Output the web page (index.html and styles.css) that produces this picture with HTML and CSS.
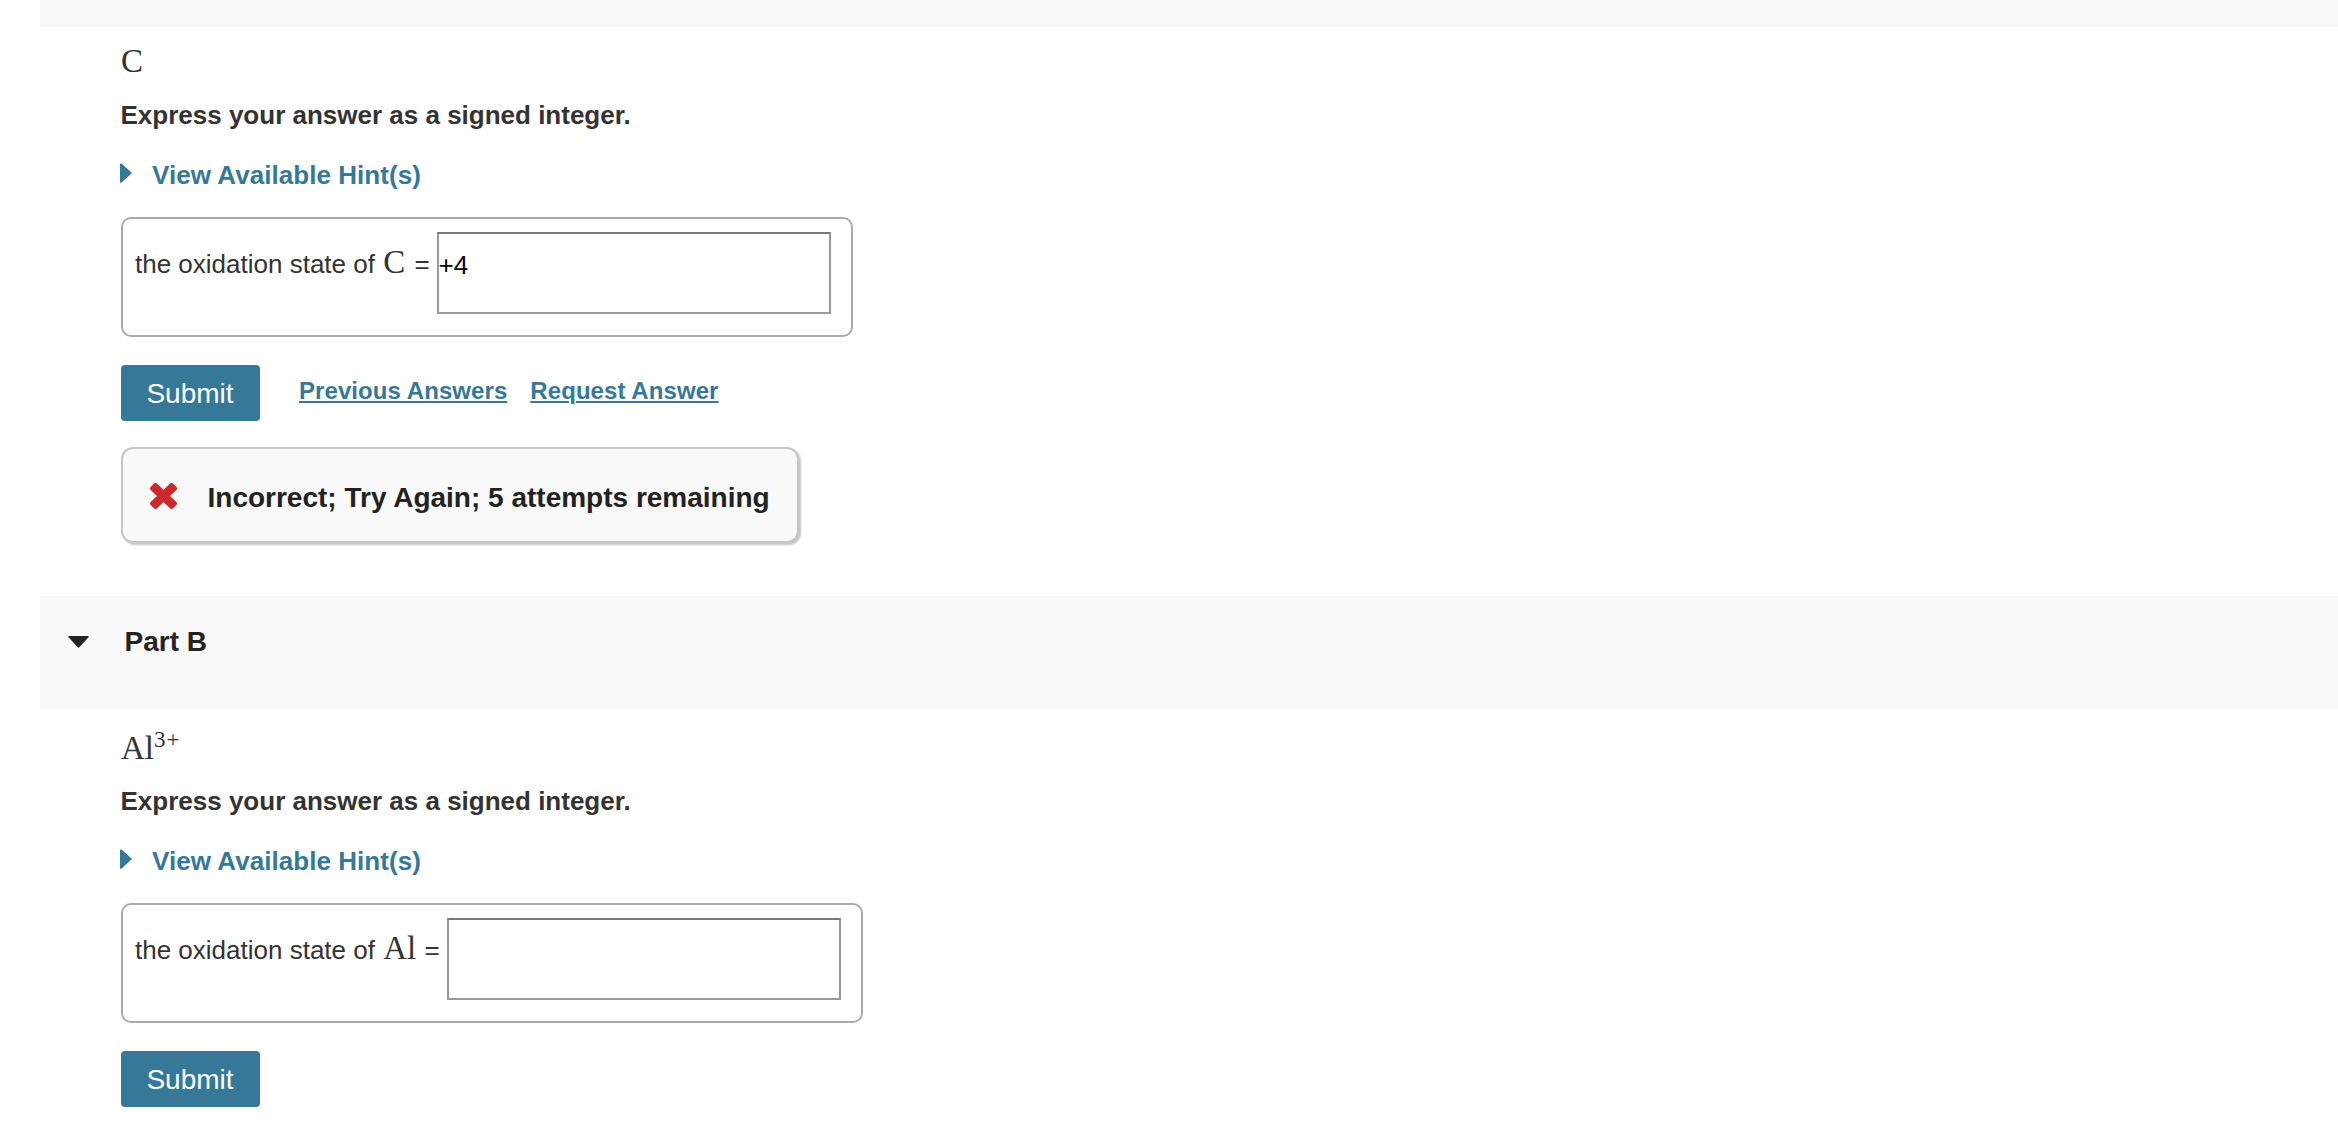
FILE: index.html
```html
<!DOCTYPE html>
<html>
<head>
    <meta charset="utf-8">
    <meta name="viewport" content="width=device-width, initial-scale=1">
    <title>Oxidation States</title>
    <link rel="stylesheet" href="styles.css">
</head>
<body>
    <div class="part-header part-header-top"></div>

    <div class="part">
        <p class="formula">C</p>
        <p class="instructions">Express your answer as a signed integer.</p>
        <a class="hints">
            <svg class="hint-arrow" viewBox="0 0 12 20"><path d="M0 1Q0 0 1.5 0.6L11.5 9.4Q12 10 11.5 10.6L1.5 19.4Q0 20 0 19Z"/></svg>
            View Available Hint(s)
        </a>
        <div class="answer-box">
            <label class="answer-label" for="answer-a">the oxidation state of <span class="math math-c">C</span> =</label>
            <input class="answer-input" id="answer-a" type="text" value="+4">
        </div>
        <div class="actions">
            <button class="submit-button">Submit</button>
            <a class="action-link">Previous Answers</a>
            <a class="action-link">Request Answer</a>
        </div>
        <div class="feedback">
            <svg class="wrong-icon" viewBox="0 0 27 26"><path d="M5.5 2L13.5 9.6L21.5 2L25 5.5L17.2 13L25 20.5L21.5 24L13.5 16.4L5.5 24L2 20.5L9.8 13L2 5.5Z"/></svg>
            <span>Incorrect; Try Again; 5 attempts remaining</span>
        </div>
    </div>

    <div class="part-header">
        <svg class="toggle-arrow" viewBox="0 0 21 12"><path d="M1 0H20Q21 0 20.4 1.2L11.3 11.3Q10.5 12 9.7 11.3L0.6 1.2Q0 0 1 0Z"/></svg>
        <span class="part-title">Part B</span>
    </div>

    <div class="part">
        <p class="formula formula-ion">Al<sup>3+</sup></p>
        <p class="instructions">Express your answer as a signed integer.</p>
        <a class="hints">
            <svg class="hint-arrow" viewBox="0 0 12 20"><path d="M0 1Q0 0 1.5 0.6L11.5 9.4Q12 10 11.5 10.6L1.5 19.4Q0 20 0 19Z"/></svg>
            View Available Hint(s)
        </a>
        <div class="answer-box">
            <label class="answer-label" for="answer-b">the oxidation state of <span class="math math-al">Al</span> =</label>
            <input class="answer-input" id="answer-b" type="text">
        </div>
        <div class="actions">
            <button class="submit-button">Submit</button>
        </div>
    </div>
</body>
</html>
```
FILE: styles.css
```css
* {
    box-sizing: border-box;
}

body {
    margin: 0;
    background-color: white;
    color: #333;
    font-family: "Liberation Sans", Arial, sans-serif;
    font-size: 26px;
    line-height: 30px;
}

.part-header {
    display: flex;
    align-items: flex-start;
    height: 113px;
    margin-left: 40px;
    padding: 30px 28px;
    background-color: #f9f9f9;
    color: #222;
}

.part-header-top {
    height: 27px;
    padding: 0;
}

.toggle-arrow {
    width: 21px;
    height: 12px;
    margin-top: 10px;
    fill: #222;
}

.part-title {
    margin-left: 35.5px;
    font-size: 28px;
    font-weight: bold;
    line-height: 32px;
}

.part {
    display: flex;
    flex-direction: column;
    align-items: flex-start;
    padding-left: 121px;
}

.formula {
    height: 36px;
    margin: 16px 0 21px;
    font-family: "Liberation Serif", "Times New Roman", serif;
    font-size: 33px;
    line-height: 36px;
}

.formula-ion {
    margin: 21px 0 20px;
}

.formula sup {
    font-size: 23px;
    letter-spacing: 1px;
    line-height: 0;
    vertical-align: 12px;
}

.instructions {
    margin: 0 0 30px -0.5px;
    font-weight: bold;
}

.hints {
    display: flex;
    margin-left: -1px;
    color: #367898;
    font-weight: bold;
    letter-spacing: 0.05px;
    cursor: pointer;
}

.hint-arrow {
    width: 12px;
    height: 20px;
    margin: 3px 20px 0 0;
    fill: #367898;
}

.answer-box {
    display: flex;
    height: 120px;
    margin-top: 27px;
    padding: 13px 20px 0 12px;
    border: 2px solid #aaa;
    border-radius: 10px;
}

.answer-label {
    margin: 16px 7px 0 0;
    white-space: nowrap;
}

.math {
    display: inline-block;
    margin-left: 1px;
    font-family: "Liberation Serif", "Times New Roman", serif;
    font-size: 33px;
    line-height: 28px;
}

.math-c {
    width: 24px;
}

.math-al {
    width: 34px;
}

.answer-input {
    width: 394px;
    height: 82px;
    padding: 0 0 15px 0;
    border: 2px solid #999;
    border-top-color: #767676;
    background-color: white;
    color: black;
    font-family: inherit;
    font-size: 26px;
}

.actions {
    display: flex;
    margin-top: 28px;
}

.submit-button {
    width: 139px;
    height: 56px;
    margin-right: 16px;
    padding: 1px 1px 0 0;
    border: none;
    border-radius: 4px;
    background-color: #367898;
    color: white;
    font-family: inherit;
    font-size: 28px;
    cursor: pointer;
}

.action-link {
    margin: 11px 0 0 23px;
    color: #367898;
    font-size: 24px;
    font-weight: bold;
    letter-spacing: 0.07px;
    text-decoration: underline;
    text-decoration-thickness: 2px;
    text-underline-offset: 2px;
    cursor: pointer;
}

.feedback {
    display: flex;
    align-items: center;
    width: 678px;
    height: 96px;
    margin: 26px 0 53px;
    padding-left: 27px;
    border: 2px solid #c6c6c6;
    border-radius: 12px;
    background-color: #f9f9f9;
    box-shadow: 2px 2px 2px #c6c6c6;
    color: #222;
    font-size: 28px;
    font-weight: bold;
    white-space: nowrap;
}

.feedback span {
    margin: 5px 0 0 30.5px;
}

.wrong-icon {
    width: 27px;
    height: 26px;
    margin-top: 2px;
    fill: #cb292d;
    stroke: #cb292d;
    stroke-width: 4;
    stroke-linejoin: round;
}
```
